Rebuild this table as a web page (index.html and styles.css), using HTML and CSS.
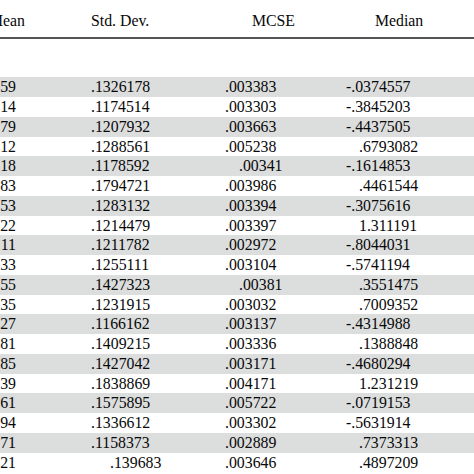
FILE: index.html
```html
<!DOCTYPE html>
<html>
<head>
<meta charset="utf-8">
<link rel="stylesheet" href="styles.css">
</head>
<body>
<div class="table">
  <div class="row head">
    <div class="c1 hmean">Mean</div>
    <div class="c2">Std. Dev.</div>
    <div class="c3 hmcse">MCSE</div>
    <div class="c4 hmed">Median</div>
  </div>
  <div class="rule"></div>
  <div class="spacer"></div>
  <div class="rows">
    <div class="row alt"><div class="c1">59</div><div class="c2">.1326178</div><div class="c3">.003383</div><div class="c4">-.0374557</div></div>
    <div class="row"><div class="c1">14</div><div class="c2">.1174514</div><div class="c3">.003303</div><div class="c4">-.3845203</div></div>
    <div class="row alt"><div class="c1">79</div><div class="c2">.1207932</div><div class="c3">.003663</div><div class="c4">-.4437505</div></div>
    <div class="row"><div class="c1">12</div><div class="c2">.1288561</div><div class="c3">.005238</div><div class="c4 pos">.6793082</div></div>
    <div class="row alt"><div class="c1">18</div><div class="c2">.1178592</div><div class="c3 short">.00341</div><div class="c4">-.1614853</div></div>
    <div class="row"><div class="c1">83</div><div class="c2">.1794721</div><div class="c3">.003986</div><div class="c4 pos">.4461544</div></div>
    <div class="row alt"><div class="c1">53</div><div class="c2">.1283132</div><div class="c3">.003394</div><div class="c4">-.3075616</div></div>
    <div class="row"><div class="c1">22</div><div class="c2">.1214479</div><div class="c3">.003397</div><div class="c4 pos">1.311191</div></div>
    <div class="row alt"><div class="c1">11</div><div class="c2">.1211782</div><div class="c3">.002972</div><div class="c4">-.8044031</div></div>
    <div class="row"><div class="c1">33</div><div class="c2">.1255111</div><div class="c3">.003104</div><div class="c4">-.5741194</div></div>
    <div class="row alt"><div class="c1">55</div><div class="c2">.1427323</div><div class="c3 short">.00381</div><div class="c4 pos">.3551475</div></div>
    <div class="row"><div class="c1">35</div><div class="c2">.1231915</div><div class="c3">.003032</div><div class="c4 pos">.7009352</div></div>
    <div class="row alt"><div class="c1">27</div><div class="c2">.1166162</div><div class="c3">.003137</div><div class="c4">-.4314988</div></div>
    <div class="row"><div class="c1">81</div><div class="c2">.1409215</div><div class="c3">.003336</div><div class="c4 pos">.1388848</div></div>
    <div class="row alt"><div class="c1">85</div><div class="c2">.1427042</div><div class="c3">.003171</div><div class="c4">-.4680294</div></div>
    <div class="row"><div class="c1">39</div><div class="c2">.1838869</div><div class="c3">.004171</div><div class="c4 pos">1.231219</div></div>
    <div class="row alt"><div class="c1">61</div><div class="c2">.1575895</div><div class="c3">.005722</div><div class="c4">-.0719153</div></div>
    <div class="row"><div class="c1">94</div><div class="c2">.1336612</div><div class="c3">.003302</div><div class="c4">-.5631914</div></div>
    <div class="row alt"><div class="c1">71</div><div class="c2">.1158373</div><div class="c3">.002889</div><div class="c4 pos">.7373313</div></div>
    <div class="row"><div class="c1">21</div><div class="c2 short">.139683</div><div class="c3">.003646</div><div class="c4 pos">.4897209</div></div>
  </div>
</div>
</body>
</html>
```
FILE: styles.css
```css
html, body {
  margin: 0;
  padding: 0;
  background: #ffffff;
  overflow: hidden;
}
body {
  width: 474px;
  height: 474px;
  font-family: "Liberation Serif", "Times New Roman", serif;
  font-size: 15.8px;
  line-height: 19.75px;
  color: #080808;
}
.table {
  display: flex;
  flex-direction: column;
}
.row {
  display: grid;
  grid-template-columns: 91px 134px 121px 1fr;
  height: 19.75px;
  white-space: nowrap;
}
.head {
  margin-top: 10.5px;
}
.rule {
  margin-top: 7px;
  height: 2px;
  background: #555555;
}
.spacer {
  height: 38.2px;
}
.rows {
  display: flex;
  flex-direction: column;
}
.rows > .alt {
  background: #dcdddd;
}
.c1 {
  display: flex;
  justify-content: flex-end;
  padding-right: 75px;
}
.hmean {
  padding-right: 66px;
}
.c2.short {
  padding-left: 19px;
}
.c3.short {
  padding-left: 14px;
}
.hmcse {
  padding-left: 27px;
}
.c4.pos {
  padding-left: 13px;
}
.hmed {
  padding-left: 29px;
}
```
